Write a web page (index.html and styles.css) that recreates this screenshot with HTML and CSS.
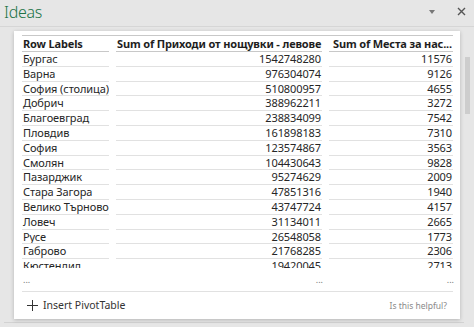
FILE: index.html
```html
<!DOCTYPE html>
<html lang="bg">
<head>
    <meta charset="UTF-8">
    <title>Ideas</title>
    <link rel="stylesheet" href="styles.css">
</head>
<body>
    <div class="pane">
        <div class="pane-head">
            <h1>Ideas</h1>
            <div class="pane-tools">
                <span class="caret"></span>
                <svg class="close" width="9" height="9" viewBox="0 0 9 9"><path d="M1 1L8 8M8 1L1 8" stroke="#555" stroke-width="1.4"/></svg>
            </div>
        </div>
        <div class="pane-body">
            <div class="card">
                <div class="table-wrap">
                    <table class="pivot">
                        <thead>
                            <tr><th>Row Labels</th><th class="num">Sum of Приходи от нощувки - левове</th><th class="num">Sum of Места за нас...</th></tr>
                        </thead>
                        <tbody>
                            <tr><td>Бургас</td><td class="num">1542748280</td><td class="num">11576</td></tr>
                            <tr><td>Варна</td><td class="num">976304074</td><td class="num">9126</td></tr>
                            <tr><td>София (столица)</td><td class="num">510800957</td><td class="num">4655</td></tr>
                            <tr><td>Добрич</td><td class="num">388962211</td><td class="num">3272</td></tr>
                            <tr><td>Благоевград</td><td class="num">238834099</td><td class="num">7542</td></tr>
                            <tr><td>Пловдив</td><td class="num">161898183</td><td class="num">7310</td></tr>
                            <tr><td>София</td><td class="num">123574867</td><td class="num">3563</td></tr>
                            <tr><td>Смолян</td><td class="num">104430643</td><td class="num">9828</td></tr>
                            <tr><td>Пазарджик</td><td class="num">95274629</td><td class="num">2009</td></tr>
                            <tr><td>Стара Загора</td><td class="num">47851316</td><td class="num">1940</td></tr>
                            <tr><td>Велико Търново</td><td class="num">43747724</td><td class="num">4157</td></tr>
                            <tr><td>Ловеч</td><td class="num">31134011</td><td class="num">2665</td></tr>
                            <tr><td>Русе</td><td class="num">26548058</td><td class="num">1773</td></tr>
                            <tr><td>Габрово</td><td class="num">21768285</td><td class="num">2306</td></tr>
                            <tr><td>Кюстендил</td><td class="num">19420045</td><td class="num">2713</td></tr>
                        </tbody>
                    </table>
                </div>
                <div class="more">
                    <span>...</span><span class="num">...</span><span class="num">...</span>
                </div>
                <div class="card-foot">
                    <a class="insert" href="#">
                        <svg width="11" height="11" viewBox="0 0 11 11"><path d="M5.5 0V11M0 5.5H11" stroke="#333" stroke-width="1"/></svg>
                        Insert PivotTable
                    </a>
                    <span class="helpful">Is this helpful?</span>
                </div>
            </div>
            <div class="scrollbar"><div class="thumb"></div></div>
        </div>
        <div class="pane-bottom"></div>
    </div>
</body>
</html>
```

FILE: styles.css
```css
* {
    margin: 0;
    padding: 0;
    box-sizing: border-box;
}
body {
    background: #e6e6e6;
    font-family: "Noto Sans", "Open Sans", sans-serif;
    color: #262626;
    overflow: hidden;
}
.pane {
    width: 474px;
    height: 327px;
}
.pane-head {
    display: flex;
    justify-content: space-between;
    align-items: center;
    height: 27px;
    padding: 0 8px 3px 4px;
    border-bottom: 1px solid #d6d6d6;
}
h1 {
    font-size: 16px;
    font-weight: 300;
    color: #217346;
    letter-spacing: -0.3px;
}
.pane-tools {
    display: flex;
    align-items: center;
    gap: 22px;
}
.caret {
    width: 0;
    height: 0;
    border-left: 3px solid transparent;
    border-right: 3px solid transparent;
    border-top: 4px solid #777;
}
.pane-body {
    display: flex;
    gap: 5px;
    padding: 4px 4px 0 14px;
}
.card {
    width: 446px;
    height: 288px;
    background: #fff;
    box-shadow: 0 1px 4px rgba(0, 0, 0, 0.22);
    padding: 4px 7px 0 8px;
}
.table-wrap {
    height: 233px;
    overflow: hidden;
    border-top: 1px solid #c8c8c8;
}
.pivot {
    border-collapse: separate;
    border-spacing: 7px 0;
    margin: 0 -7px;
    width: calc(100% + 14px);
    font-size: 11px;
    table-layout: fixed;
}
.pivot th,
.pivot td {
    line-height: 13.8px;
    padding: 0 1px;
    border-bottom: 1px solid #e1e1e1;
    white-space: nowrap;
    overflow: hidden;
    text-align: left;
    font-weight: 400;
    letter-spacing: -0.1px;
}
.pivot th {
    font-weight: 700;
    color: #1e1e1e;
    line-height: 15px;
    border-bottom-color: #c8c8c8;
    letter-spacing: -0.15px;
}
.pivot th:nth-child(1) { width: 87px; }
.pivot th:nth-child(2) { width: 206px; }
.pivot .num {
    text-align: right;
}
.more {
    display: grid;
    grid-template-columns: 87px 213px 131px;
    align-items: center;
    height: 24px;
    padding: 0 1px;
    font-size: 9px;
    color: #777;
    border-bottom: 1px solid #e1e1e1;
}
.more .num {
    text-align: right;
}
.card-foot {
    display: flex;
    justify-content: space-between;
    align-items: center;
    height: 26px;
    padding: 0 6px 0 5px;
}
.insert {
    display: flex;
    align-items: center;
    gap: 5px;
    font-size: 10.5px;
    color: #333;
    text-decoration: none;
}
.helpful {
    font-size: 8.5px;
    color: #8a8a8a;
}
.scrollbar {
    width: 5px;
    padding-top: 26px;
}
.thumb {
    height: 57px;
    background: #cdcdcd;
}
.pane-bottom {
    margin: 3px 10px 0 4px;
    border-top: 1px solid #d2d2d2;
}
```
